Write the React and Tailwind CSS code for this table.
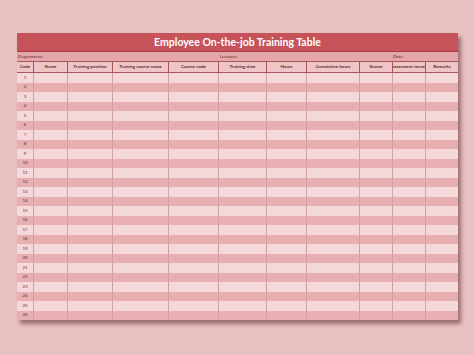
import React from 'react'

const cols = 'grid grid-cols-[17px_34px_45px_56px_50px_48px_40px_53px_33px_33px_32px]'

const headers = [
  'Code',
  'Name',
  'Training position',
  'Training course name',
  'Course code',
  'Training date',
  'Hours',
  'Cumulative hours',
  'Scores',
  'Assessment records',
  'Remarks',
]

function Row({ n }) {
  const bg = n % 2 === 1 ? 'bg-[#f4d8da]' : 'bg-[#e8afb2]'
  return (
    <div className={`${cols} h-[9.5px] ${bg}`}>
      {headers.map((h, i) => (
        <div
          key={h}
          className={`flex items-center justify-center text-[4.5px] leading-none text-[#6b2a2e] ${
            i < headers.length - 1 ? 'border-r border-[#cfa1a4]' : ''
          }`}
        >
          {i === 0 ? n : ''}
        </div>
      ))}
    </div>
  )
}

export default function App() {
  const rows = Array.from({ length: 26 }, (_, i) => i + 1)
  return (
    <div className="w-[474px] h-[355px] bg-[#e9c1c3] pt-[33px] pl-[17px] font-['Lato','Liberation_Sans',sans-serif]">
      <div className="w-[441px] shadow-[3px_4px_4px_rgba(90,40,42,0.55)]">
        <div className="h-[19px] bg-[#c6525a] border-b border-[#a8393f] flex items-center justify-center">
          <span className="text-white font-bold text-[10.5px] leading-none">
            Employee On-the-job Training Table
          </span>
        </div>
        <div className={`${cols} h-[9px] bg-[#e4a6a9] text-[4.5px] leading-[9px] text-[#5e2a2d]`}>
          <span className="col-span-5 pl-px">Department:</span>
          <span className="col-span-4 pl-px">Lecturer:</span>
          <span className="col-span-2">Date:</span>
        </div>
        <div className={`${cols} h-[12px] bg-[#efc5c7] border-y border-[#a8575c]`}>
          {headers.map((h, i) => (
            <div
              key={h}
              className={`flex items-center justify-center overflow-hidden whitespace-nowrap text-[4.5px] font-bold leading-none text-[#5e2a2d] ${
                i < headers.length - 1 ? 'border-r border-[#a8575c]' : ''
              }`}
            >
              {h}
            </div>
          ))}
        </div>
        {rows.map((n) => (
          <Row key={n} n={n} />
        ))}
      </div>
    </div>
  )
}
